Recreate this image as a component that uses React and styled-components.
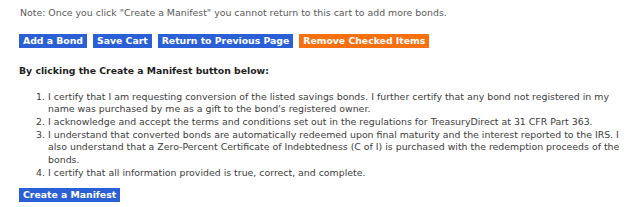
import React from 'react'
import styled, { createGlobalStyle } from 'styled-components'

const Global = createGlobalStyle`
    html,body{
        margin:0;
        padding:0;
        background:#fff;
    }
    body{
        font-family:"DejaVu Sans",Verdana,sans-serif;
        font-size:9.4px;
        color:#3d3d3d;
    }
`

const buttons = [
    { label: 'Add a Bond' },
    { label: 'Save Cart' },
    { label: 'Return to Previous Page' },
    { label: 'Remove Checked Items', warn: true },
]

const terms = [
    "I certify that I am requesting conversion of the listed savings bonds. I further certify that any bond not registered in my name was purchased by me as a gift to the bond's registered owner.",
    'I acknowledge and accept the terms and conditions set out in the regulations for TreasuryDirect at 31 CFR Part 363.',
    'I understand that converted bonds are automatically redeemed upon final maturity and the interest reported to the IRS. I also understand that a Zero-Percent Certificate of Indebtedness (C of I) is purchased with the redemption proceeds of the bonds.',
    'I certify that all information provided is true, correct, and complete.',
]

function App() {
    return (
        <Page>
            <Global />
            <Note>Note: Once you click "Create a Manifest" you cannot return to this cart to add more bonds.</Note>
            <Toolbar>
                {buttons.map((b) => (
                    <Button key={b.label} $warn={b.warn}>{b.label}</Button>
                ))}
            </Toolbar>
            <Heading>By clicking the Create a Manifest button below:</Heading>
            <Terms>
                {terms.map((t, i) => (
                    <li key={i}>{t}</li>
                ))}
            </Terms>
            <Button>Create a Manifest</Button>
        </Page>
    )
}

export default App

const Page = styled.div`
    width:613px;
    padding:7px 0 0 19px;
    display:flex;
    flex-direction:column;
    align-items:flex-start;
`

const Note = styled.p`
    margin:0 0 0 1px;
    font-size:9.4px;
    line-height:11px;
    color:#5a5a5a;
`

const Toolbar = styled.div`
    display:flex;
    gap:6px;
    margin-top:16px;
`

const Button = styled.button`
    border:none;
    margin:0;
    height:14px;
    padding:0 4px;
    font-family:"DejaVu Sans",Verdana,sans-serif;
    font-size:9.3px;
    font-weight:bold;
    line-height:14px;
    color:#fff;
    background:${(p) => (p.$warn ? '#f7700f' : '#2b5fd6')};
    cursor:pointer;
`

const Heading = styled.h3`
    margin:16.5px 0 0 0;
    font-size:9.3px;
    font-weight:bold;
    color:#1e1e1e;
    line-height:12px;
`

const Terms = styled.ol`
    margin:14px 0 8.5px 0;
    padding-left:29px;
    line-height:12.7px;
`
